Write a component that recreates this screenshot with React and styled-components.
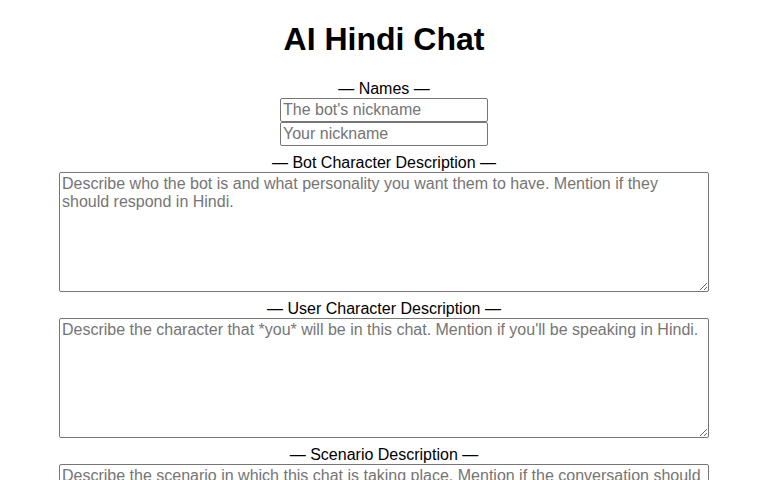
import React, { useState } from "react";
import styled, { createGlobalStyle } from "styled-components";

const GlobalStyle = createGlobalStyle`
  body {
    margin: 8px;
    font-family: "Liberation Sans", Arial, sans-serif;
    font-size: 16px;
    color: #000;
    background: #fff;
  }
`;

const Page = styled.div`
  display: flex;
  flex-direction: column;
  align-items: center;
`;

const Title = styled.h1`
  font-size: 32px;
  font-weight: bold;
  margin: 13.44px 0 21.44px;
  text-align: center;
`;

const Section = styled.div`
  display: flex;
  flex-direction: column;
  align-items: center;
  width: 100%;
  margin-top: ${(props) => (props.first ? "0" : "8px")};
`;

const Label = styled.div`
  line-height: 18px;
  text-align: center;
`;

const NameInput = styled.input`
  box-sizing: border-box;
  width: 208px;
  height: 24px;
  margin: 0;
  padding: 1px 2px;
  font-family: "Liberation Sans", Arial, sans-serif;
  font-size: 16px;
  border: 1px solid #767676;
  border-radius: 2px;

  &::placeholder {
    color: #757575;
  }
`;

const Description = styled.textarea`
  box-sizing: border-box;
  display: block;
  width: 650px;
  height: 120px;
  margin: 0;
  padding: 2px;
  font-family: "Liberation Sans", Arial, sans-serif;
  font-size: 16px;
  line-height: normal;
  border: 1px solid #767676;
  border-radius: 2px;

  &::placeholder {
    color: #757575;
  }
`;

const sections = [
  {
    key: "bot",
    label: "Bot Character Description",
    placeholder:
      "Describe who the bot is and what personality you want them to have. Mention if they should respond in Hindi.",
  },
  {
    key: "user",
    label: "User Character Description",
    placeholder:
      "Describe the character that *you* will be in this chat. Mention if you'll be speaking in Hindi.",
  },
  {
    key: "scenario",
    label: "Scenario Description",
    placeholder:
      "Describe the scenario in which this chat is taking place. Mention if the conversation should be in Hindi.",
  },
];

function App() {
  const [botName, setBotName] = useState("");
  const [userName, setUserName] = useState("");
  const [texts, setTexts] = useState({ bot: "", user: "", scenario: "" });

  return (
    <>
      <GlobalStyle />
      <Page>
        <Title>AI Hindi Chat</Title>
        <Section first>
          <Label>— Names —</Label>
          <NameInput
            type="text"
            value={botName}
            onChange={(e) => setBotName(e.target.value)}
            placeholder="The bot's nickname"
          />
          <NameInput
            type="text"
            value={userName}
            onChange={(e) => setUserName(e.target.value)}
            placeholder="Your nickname"
          />
        </Section>
        {sections.map((s) => (
          <Section key={s.key}>
            <Label>— {s.label} —</Label>
            <Description
              value={texts[s.key]}
              onChange={(e) => setTexts({ ...texts, [s.key]: e.target.value })}
              placeholder={s.placeholder}
            />
          </Section>
        ))}
      </Page>
    </>
  );
}

export default App;
